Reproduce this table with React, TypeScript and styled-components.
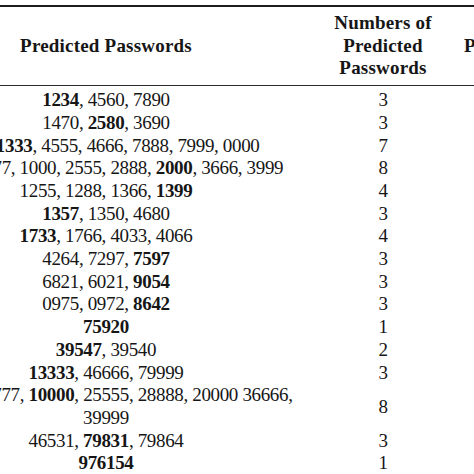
import React from "react";
import styled, { createGlobalStyle } from "styled-components";

const GlobalStyle = createGlobalStyle`
  html, body {
    margin: 0;
    padding: 0;
    background: #fff;
  }
  body {
    font-family: "Liberation Serif", "Times New Roman", serif;
    color: #161616;
  }
`;

// the table is wider than the window, the picture is a crop of it
const Page = styled.div`
  width: 474px;
  height: 474px;
  overflow: hidden;
  background: #fff;
  padding-top: 5px;
  box-sizing: border-box;
`;

const Table = styled.table`
  margin-left: -90px;
  border-collapse: separate;
  border-spacing: 0;
  table-layout: fixed;
  width: 654px;
  border-top: 2px solid #1c1c1c;
  font-size: 19px;
  line-height: 22.7px;
`;

const HeadCell = styled.th<{ $align?: string }>`
  padding: 5px 0;
  font-weight: 700;
  letter-spacing: 0.2px;
  text-align: ${(p) => p.$align || "center"};
  vertical-align: middle;
  border-bottom: 1px solid #2a2a2a;
  white-space: nowrap;
`;

const Cell = styled.td<{ $first?: boolean }>`
  padding: ${(p) => (p.$first ? "3px 0 0" : "0")};
  text-align: center;
  vertical-align: middle;
  white-space: pre;
  letter-spacing: -0.35px;
`;

const B = styled.b`
  font-weight: 700;
`;

interface IRow {
  passwords: string;
  count: number;
}

const rows: IRow[] = [
  { passwords: "**1234**, 4560, 7890", count: 3 },
  { passwords: "1470, **2580**, 3690", count: 3 },
  { passwords: "1111, **1333**, 4555, 4666, 7888, 7999, 0000", count: 7 },
  { passwords: "1555, 1777, 1000, 2555, 2888, **2000**, 3666, 3999", count: 8 },
  { passwords: "1255, 1288, 1366, **1399**", count: 4 },
  { passwords: "**1357**, 1350, 4680", count: 3 },
  { passwords: "**1733**, 1766, 4033, 4066", count: 4 },
  { passwords: "4264, 7297, **7597**", count: 3 },
  { passwords: "6821, 6021, **9054**", count: 3 },
  { passwords: "0975, 0972, **8642**", count: 3 },
  { passwords: "**75920**", count: 1 },
  { passwords: "**39547**, 39540", count: 2 },
  { passwords: "**13333**, 46666, 79999", count: 3 },
  { passwords: "15555, 17777, **10000**, 25555, 28888, 20000 36666,\n39999", count: 8 },
  { passwords: "46531, **79831**, 79864", count: 3 },
  { passwords: "**976154**", count: 1 },
];

// "**x**" marks the bold password of a row
function renderPasswords(text: string) {
  return text.split("**").map((part, i) => (i % 2 ? <B key={i}>{part}</B> : part));
}

export default function App() {
  return (
    <>
      <GlobalStyle />
      <Page>
        <Table>
          <colgroup>
            <col style={{ width: 392 }} />
            <col style={{ width: 162 }} />
            <col style={{ width: 100 }} />
          </colgroup>
          <thead>
            <tr>
              <HeadCell>Predicted Passwords</HeadCell>
              <HeadCell>
                Numbers of
                <br />
                Predicted
                <br />
                Passwords
              </HeadCell>
              <HeadCell $align="left">Probability</HeadCell>
            </tr>
          </thead>
          <tbody>
            {rows.map((row, i) => (
              <tr key={i}>
                <Cell $first={i === 0}>{renderPasswords(row.passwords)}</Cell>
                <Cell $first={i === 0}>{row.count}</Cell>
                <Cell $first={i === 0} />
              </tr>
            ))}
          </tbody>
        </Table>
      </Page>
    </>
  );
}
